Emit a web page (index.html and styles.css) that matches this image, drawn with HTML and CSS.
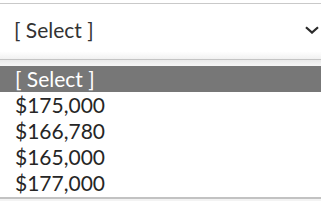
FILE: index.html
```html
<!DOCTYPE html>
<html>
<head>
  <meta charset="UTF-8">
  <title>Price select</title>
  <link rel="stylesheet" href="styles.css">
</head>
<body>
  <!-- closed select -->
  <div class="field">
    <span class="field-value">[ Select ]</span>
    <svg class="chevron" width="14" height="8" viewBox="0 0 14 8">
      <path d="M1 1.2 L7 6.6 L13 1.2" fill="none" stroke="#2b2b2b" stroke-width="2.2"/>
    </svg>
  </div>

  <!-- open option list -->
  <div class="list">
    <div class="list-shade"></div>
    <div class="option selected">[ Select ]</div>
    <div class="option">$175,000</div>
    <div class="option">$166,780</div>
    <div class="option">$165,000</div>
    <div class="option">$177,000</div>
  </div>

  <!-- content behind, cut off by the window -->
  <div class="peek">
    <span class="peek-label">Price</span>
    <span class="peek-sep">|</span>
    <span>[ Select ]</span>
  </div>
</body>
</html>
```

FILE: styles.css
```css
/* --- page --- */
body{margin:0;padding:0;background:#fff;font-family:Lato,"Open Sans",sans-serif;color:#2b2b2b;overflow:hidden;}

/* --- closed select --- */
.field{margin-top:3px;height:55px;display:flex;align-items:center;justify-content:space-between;
  padding:0 2px 0 14px;border-top:1px solid #c9c9c9;border-bottom:1px solid #c4c4c4;
  background:linear-gradient(to bottom,#fff 0,#fff 86%,#f1f1f1 100%);}
.field-value{font-size:21px;line-height:24px;color:#333;margin-bottom:4px;}
.chevron{display:block;margin-bottom:3px;}

/* --- option list --- */
.list{background:#fff;}
.list-shade{height:6px;background:linear-gradient(to bottom,#e9e9e9,#f6f6f6);}
.option{height:26px;line-height:25px;padding-left:15px;font-size:21px;color:#262626;}
.option.selected{background:#777;color:#fff;}

/* --- underlying row --- */
.peek{margin-top:1px;border-top:2px solid #c2c2c2;background:#f3f3f3;height:30px;
  display:flex;gap:12px;padding:1px 0 0 2px;font-size:20px;line-height:24px;color:#222;}
.peek-sep{color:#555;}
```
